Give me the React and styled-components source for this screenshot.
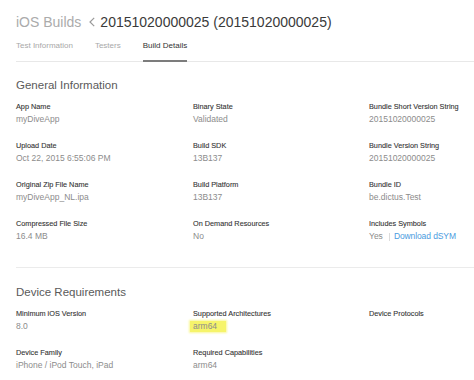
import React from "react";
import styled, { createGlobalStyle } from "styled-components";

const GlobalStyle = createGlobalStyle`
  body {
    margin: 0;
    background: #fff;
    font-family: "Liberation Sans", Arial, sans-serif;
  }
`;

const Page = styled.div`
  padding-left: 16px;
  width: 458px;
  height: 380px;
  overflow: hidden;
`;

const Header = styled.div`
  padding-top: 14px;
`;

const Title = styled.h1`
  margin: 0;
  display: flex;
  align-items: center;
  font-size: 14px;
  line-height: 16px;
  font-weight: normal;
  white-space: nowrap;
`;

const Crumb = styled.span`
  color: #ababab;
`;

const BuildName = styled.span`
  color: #3a3a3a;
`;

const Chevron = styled.svg`
  margin: 0 5px 0 8px;
  flex-shrink: 0;
`;

const Tabs = styled.div`
  display: flex;
  gap: 22px;
  margin-top: 11px;
  border-bottom: 1px solid #e8e8e8;
`;

const Tab = styled.div`
  font-size: 8px;
  line-height: 10px;
  padding-bottom: 9px;
  margin-bottom: -1px;
  color: ${(p) => (p.$active ? "#333" : "#a8a8a8")};
  border-bottom: 2px solid ${(p) => (p.$active ? "#7c7c7c" : "transparent")};
`;

const Section = styled.section`
  padding: ${(p) => p.$top}px 0 25px;
  border-bottom: ${(p) => (p.$divider ? "1px solid #ebebeb" : "none")};
`;

const Heading = styled.h2`
  margin: 0 0 10px;
  font-size: 11.5px;
  line-height: 14px;
  font-weight: normal;
  color: #5a5a5a;
`;

const Grid = styled.div`
  display: grid;
  grid-template-columns: 177px 176px 1fr;
  row-gap: 16px;
`;

const Field = styled.div`
  display: flex;
  flex-direction: column;
  gap: 2px;
  white-space: nowrap;
`;

const Label = styled.div`
  font-size: 7.3px;
  line-height: 10px;
  color: #333;
  -webkit-text-stroke: 0.1px #333;
`;

const Value = styled.div`
  font-size: 8.5px;
  line-height: 11px;
  color: #8c8c8c;
  min-height: 11px;
  display: flex;
  align-items: center;
`;

const Mark = styled.span`
  background: #f6f46a;
  box-shadow: 0 0 2px 1px #f9f79a;
  padding: 0 9px 0 3px;
  margin-left: -3px;
`;

const Sep = styled.span`
  display: inline-block;
  width: 1px;
  height: 8px;
  background: #dcdcdc;
  margin: 0 4px 0 6px;
`;

const Link = styled.a`
  color: #4a9be0;
  text-decoration: none;
  letter-spacing: -0.1px;
`;

const general = [
  ["App Name", "myDiveApp"],
  ["Binary State", "Validated"],
  ["Bundle Short Version String", "20151020000025"],
  ["Upload Date", "Oct 22, 2015 6:55:06 PM"],
  ["Build SDK", "13B137"],
  ["Bundle Version String", "20151020000025"],
  ["Original Zip File Name", "myDiveApp_NL.ipa"],
  ["Build Platform", "13B137"],
  ["Bundle ID", "be.dictus.Test"],
  ["Compressed File Size", "16.4 MB"],
  ["On Demand Resources", "No"],
  [
    "Includes Symbols",
    <>
      Yes
      <Sep />
      <Link href="#">Download dSYM</Link>
    </>,
  ],
];

const device = [
  ["Minimum iOS Version", "8.0"],
  ["Supported Architectures", <Mark>arm64</Mark>],
  ["Device Protocols", ""],
  ["Device Family", "iPhone / iPod Touch, iPad"],
  ["Required Capabilities", "arm64"],
];

const Fields = ({ items }) => (
  <Grid>
    {items.map(([label, value]) => (
      <Field key={label}>
        <Label>{label}</Label>
        <Value>{value}</Value>
      </Field>
    ))}
  </Grid>
);

export default function App() {
  return (
    <>
      <GlobalStyle />
      <Page>
        <Header>
          <Title>
            <Crumb>iOS Builds</Crumb>
            <Chevron width="6" height="10" viewBox="0 0 6 10">
              <path d="M5.2 0.8 L1 5 L5.2 9.2" fill="none" stroke="#9a9a9a" strokeWidth="1.2" />
            </Chevron>
            <BuildName>20151020000025 (20151020000025)</BuildName>
          </Title>
          <Tabs>
            <Tab>Test Information</Tab>
            <Tab>Testers</Tab>
            <Tab $active>Build Details</Tab>
          </Tabs>
        </Header>
        <Section $top={16} $divider>
          <Heading>General Information</Heading>
          <Fields items={general} />
        </Section>
        <Section $top={17}>
          <Heading>Device Requirements</Heading>
          <Fields items={device} />
        </Section>
      </Page>
    </>
  );
}
